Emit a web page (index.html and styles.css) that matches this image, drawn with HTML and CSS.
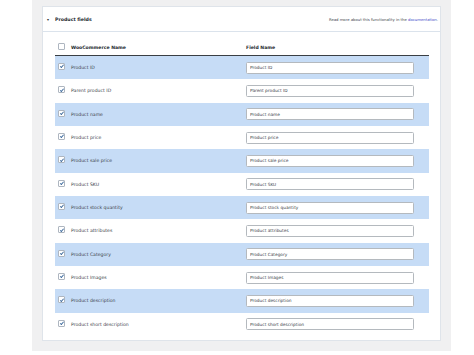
FILE: index.html
```html
<!DOCTYPE html>
<html>
<head>
<meta charset="utf-8">
<link rel="stylesheet" href="styles.css">
</head>
<body>
<div class="wrap">
  <div class="card">
    <div class="card-head">
      <span class="arrow">&#9662;</span>
      <span class="title">Product fields</span>
      <span class="more">Read more about this functionality in the <a href="#">documentation</a>.</span>
    </div>
    <div class="card-body">
      <table class="fields">
        <tr class="head">
          <th class="c-name"><span class="box"></span>WooCommerce Name</th>
          <th>Field Name</th>
        </tr>
        <tr class="on"><td class="c-name"><span class="box checked"></span>Product ID</td><td><input class="field" value="Product ID"></td></tr>
        <tr><td class="c-name"><span class="box checked"></span>Parent product ID</td><td><input class="field" value="Parent product ID"></td></tr>
        <tr class="on"><td class="c-name"><span class="box checked"></span>Product name</td><td><input class="field" value="Product name"></td></tr>
        <tr><td class="c-name"><span class="box checked"></span>Product price</td><td><input class="field" value="Product price"></td></tr>
        <tr class="on"><td class="c-name"><span class="box checked"></span>Product sale price</td><td><input class="field" value="Product sale price"></td></tr>
        <tr><td class="c-name"><span class="box checked"></span>Product SKU</td><td><input class="field" value="Product SKU"></td></tr>
        <tr class="on"><td class="c-name"><span class="box checked"></span>Product stock quantity</td><td><input class="field" value="Product stock quantity"></td></tr>
        <tr><td class="c-name"><span class="box checked"></span>Product attributes</td><td><input class="field" value="Product attributes"></td></tr>
        <tr class="on"><td class="c-name"><span class="box checked"></span>Product Category</td><td><input class="field" value="Product Category"></td></tr>
        <tr><td class="c-name"><span class="box checked"></span>Product Images</td><td><input class="field" value="Product Images"></td></tr>
        <tr class="on"><td class="c-name"><span class="box checked"></span>Product description</td><td><input class="field" value="Product description"></td></tr>
        <tr><td class="c-name"><span class="box checked"></span>Product short description</td><td><input class="field" value="Product short description"></td></tr>
      </table>
    </div>
  </div>
</div>
</body>
</html>
```
FILE: styles.css
```css
body {
  margin: 0;
  background: #fff;
  font-family: "DejaVu Sans", Verdana, sans-serif;
  color: #3c434a;
}

.wrap {
  margin-left: 32px;
  width: 399px;
  padding: 6px 10px 10px;
  background: #f0f0f1;
}

.card {
  background: #fff;
  border: 1px solid #dfe4ea;
  height: 333px;
  box-sizing: content-box;
}

.card-head {
  display: flex;
  align-items: center;
  height: 24px;
  border-bottom: 1px solid #dbe3ec;
  padding: 0 2px 0 4px;
}

.arrow {
  font-size: 4px;
  width: 8px;
  color: #333;
}

.title {
  font-size: 4.7px;
  font-weight: bold;
  color: #23282d;
}

.more {
  margin-left: auto;
  font-size: 3.8px;
  color: #3c434a;
}

.more a {
  color: #3a46c8;
  text-decoration: none;
}

.card-body {
  padding: 7px 0 0 12px;
}

.fields {
  width: 374px;
  border-collapse: collapse;
  font-size: 4.6px;
}

.fields th {
  text-align: left;
  height: 16px;
  padding: 0;
  font-weight: bold;
  color: #23282d;
  border-bottom: 1px solid #3a3f44;
}

.fields td {
  height: 23.33px;
  padding: 0;
}

.c-name {
  width: 188px;
  padding-left: 3px !important;
}

.fields tr.on td {
  background: #c6dcf6;
}

.box {
  display: inline-block;
  vertical-align: middle;
  width: 5px;
  height: 5px;
  border: 1px solid #aeb6c0;
  border-radius: 1px;
  background: #fff;
  margin-right: 6px;
  position: relative;
  top: -1px;
}

.box.checked::after {
  content: "";
  position: absolute;
  left: 1.6px;
  top: 0.2px;
  width: 1.2px;
  height: 2.8px;
  border: solid #3d6a9e;
  border-width: 0 0.8px 0.8px 0;
  transform: rotate(40deg);
}

.field {
  display: block;
  width: 168px;
  height: 12px;
  box-sizing: border-box;
  border: 1px solid #b4b9be;
  border-radius: 1.5px;
  padding: 0 3px;
  font-family: "DejaVu Sans", Verdana, sans-serif;
  font-size: 4.3px;
  color: #3c434a;
  background: #fff;
}
```
